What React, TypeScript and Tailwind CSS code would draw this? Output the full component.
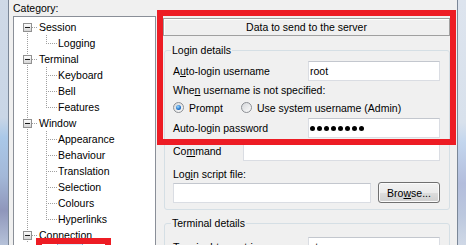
import React from "react";

const DOT = "#a0a0a0";

function TopLines({ first }: { first: boolean }) {
  return (
    <svg width="24" height="16" className="block shrink-0" shapeRendering="crispEdges">
      <defs>
        <linearGradient id="expg" x1="0" y1="0" x2="0" y2="1">
          <stop offset="0" stopColor="#ffffff" />
          <stop offset="1" stopColor="#d2d2d2" />
        </linearGradient>
      </defs>
      {!first && <line x1="13.5" y1="0" x2="13.5" y2="4" stroke={DOT} strokeDasharray="1 1" />}
      <line x1="13.5" y1="14" x2="13.5" y2="16" stroke={DOT} strokeDasharray="1 1" />
      <line x1="18" y1="8.5" x2="24" y2="8.5" stroke={DOT} strokeDasharray="1 1" />
      <rect x="9.5" y="4.5" width="8" height="8" fill="url(#expg)" stroke="#919191" />
      <line x1="11" y1="8.5" x2="16" y2="8.5" stroke="#1a1a1a" />
    </svg>
  );
}

function ChildLines({ last, trunk }: { last: boolean; trunk: boolean }) {
  return (
    <svg width="43" height="16" className="block shrink-0" shapeRendering="crispEdges">
      {trunk && <line x1="13.5" y1="0" x2="13.5" y2="16" stroke={DOT} strokeDasharray="1 1" />}
      <line x1="32.5" y1="0" x2="32.5" y2={last ? 9 : 16} stroke={DOT} strokeDasharray="1 1" />
      <line x1="34" y1="8.5" x2="43" y2="8.5" stroke={DOT} strokeDasharray="1 1" />
    </svg>
  );
}

type Row = { label: string; level: 0 | 1; first?: boolean; last?: boolean; trunk?: boolean; selected?: boolean };

const rows: Row[] = [
  { label: "Session", level: 0, first: true },
  { label: "Logging", level: 1, last: true, trunk: true },
  { label: "Terminal", level: 0 },
  { label: "Keyboard", level: 1, trunk: true },
  { label: "Bell", level: 1, trunk: true },
  { label: "Features", level: 1, last: true, trunk: true },
  { label: "Window", level: 0 },
  { label: "Appearance", level: 1, trunk: true },
  { label: "Behaviour", level: 1, trunk: true },
  { label: "Translation", level: 1, trunk: true },
  { label: "Selection", level: 1, trunk: true },
  { label: "Colours", level: 1, trunk: true },
  { label: "Hyperlinks", level: 1, last: true, trunk: true },
  { label: "Connection", level: 0 },
  { label: "Data", level: 1, selected: true },
  { label: "Proxy", level: 1 },
];

function Field({ className, children }: { className: string; children?: React.ReactNode }) {
  return (
    <div
      className={`h-[20px] shrink-0 bg-white border border-[#dadde3] border-t-[#c3c7ce] flex items-center pl-px ${className}`}
    >
      {children}
    </div>
  );
}

function Radio({ checked }: { checked: boolean }) {
  return (
    <span className="w-[11px] h-[11px] shrink-0 rounded-full border border-[#8c8f94] bg-[linear-gradient(135deg,#d6d8db,#fbfbfb)] flex items-center justify-center">
      {checked && (
        <span className="w-[5px] h-[5px] rounded-full bg-[radial-gradient(circle_at_40%_35%,#9fdcff,#1d6fc9_60%,#0d4a92)]" />
      )}
    </span>
  );
}

export default function App() {
  return (
    <div className="relative w-[466px] h-[245px] overflow-hidden flex bg-[#f0f0f0] text-black text-[10.5px] leading-[12px] font-['Liberation_Sans',Arial,sans-serif]">
      {/* left window frame */}
      <div className="w-[8px] shrink-0 bg-[linear-gradient(to_bottom,#cfd9e6_0%,#c9d6e6_48%,#aac8e8_56%,#a3b8d8_72%,#8f96bb_86%,#b6c2d9_100%)]" />
      <div className="w-px shrink-0 bg-[#7b8797]" />

      {/* body */}
      <div className="w-[448px] shrink-0 flex pl-[4px]">
        {/* category tree */}
        <div className="w-[143px] shrink-0 pt-[2px] flex flex-col">
          <div className="h-[12px]">
            Cate<u>g</u>ory:
          </div>
          <div className="mt-[2px] h-[260px] shrink-0 border border-[#8a8f98] bg-white pt-[2px]">
            {rows.map((r) => (
              <div key={r.label} className="flex h-[16px] items-center whitespace-nowrap">
                {r.level === 0 ? (
                  <TopLines first={!!r.first} />
                ) : (
                  <ChildLines last={!!r.last} trunk={!!r.trunk} />
                )}
                <span
                  className={
                    r.selected
                      ? "h-[16px] leading-[14px] border border-[#84acdd] bg-[#dcebfc] pr-[2px]"
                      : "h-[16px] leading-[14px] border border-transparent"
                  }
                >
                  {r.label}
                </span>
              </div>
            ))}
          </div>
        </div>

        {/* settings panel */}
        <div className="w-[287px] shrink-0 ml-[7px] flex flex-col">
          <div className="mt-[18px] h-[18px] shrink-0 border border-[#a0a0a0] shadow-[inset_1px_1px_0_#ffffff] flex items-center justify-center">
            Data to send to the server
          </div>

          <fieldset className="mt-[8px] ml-px w-[286px] shrink-0 border border-[#d5dfe5] rounded-[3px] pl-[8px] pr-[9px] pb-[6px]">
            <legend className="ml-[-2px] px-px leading-[12px]">Login details</legend>
            <div className="mt-[5px] flex h-[20px] items-center justify-between">
              <span>
                A<u>u</u>to-login username
              </span>
              <Field className="w-[132px]">root</Field>
            </div>
            <div className="mt-[3px] h-[12px]">
              Whe<u>n</u> username is not specified:
            </div>
            <div className="mt-[5px] flex h-[13px] items-center">
              <div className="w-[68px] flex items-center gap-[5px]">
                <Radio checked />
                <span>Prompt</span>
              </div>
              <div className="flex items-center gap-[5px]">
                <Radio checked={false} />
                <span>Use system username (Admin)</span>
              </div>
            </div>
            <div className="mt-[4px] flex h-[20px] items-center justify-between">
              <span>Auto-login password</span>
              <Field className="w-[132px] gap-[2px] pl-[2px]">
                {Array.from({ length: 8 }).map((_, i) => (
                  <span key={i} className="w-[5px] h-[5px] rounded-full bg-black" />
                ))}
              </Field>
            </div>
            <div className="mt-[3px] flex h-[20px] items-center justify-between">
              <span>
                Co<u>m</u>mand
              </span>
              <Field className="w-[197px]" />
            </div>
            <div className="mt-[7px] h-[12px]">
              Log<u>i</u>n script file:
            </div>
            <div className="mt-[3px] flex items-end justify-between">
              <Field className="w-[198px]" />
              <div className="w-[62px] h-[21px] shrink-0 -mt-px rounded-[3px] border border-[#707070] bg-[linear-gradient(to_bottom,#f2f2f2_0%,#ebebeb_50%,#dddddd_51%,#cfcfcf_100%)] shadow-[inset_0_0_0_1px_#fbfbfb] flex items-center justify-center">
                Bro<u>w</u>se...
              </div>
            </div>
          </fieldset>

          <fieldset className="mt-[7px] ml-px w-[286px] shrink-0 border border-[#d5dfe5] rounded-[3px] pl-[8px] pr-[9px] pb-[6px]">
            <legend className="ml-[-2px] px-px leading-[12px]">Terminal details</legend>
            <div className="mt-[8px] flex h-[20px] items-center justify-between">
              <span>Terminal-type string</span>
              <Field className="w-[132px]">xterm</Field>
            </div>
          </fieldset>
        </div>
        <div className="w-[7px] shrink-0" />
      </div>

      {/* right window frame */}
      <div className="w-px shrink-0 bg-[#7b8797]" />
      <div className="w-[8px] shrink-0 bg-[linear-gradient(to_bottom,#dde4ee_0%,#d8e1ec_50%,#c3d6ee_58%,#b3bddc_75%,#bcc8de_88%,#cfd8e6_100%)]" />

      {/* red annotation boxes */}
      <div className="absolute left-[157px] top-[10px] w-[299px] h-[135px] border-[6px] border-[#ed1c24] pointer-events-none" />
      <div className="absolute left-[36px] top-[238px] w-[75px] h-[30px] border-[6px] border-[#ed1c24] pointer-events-none" />
    </div>
  );
}
